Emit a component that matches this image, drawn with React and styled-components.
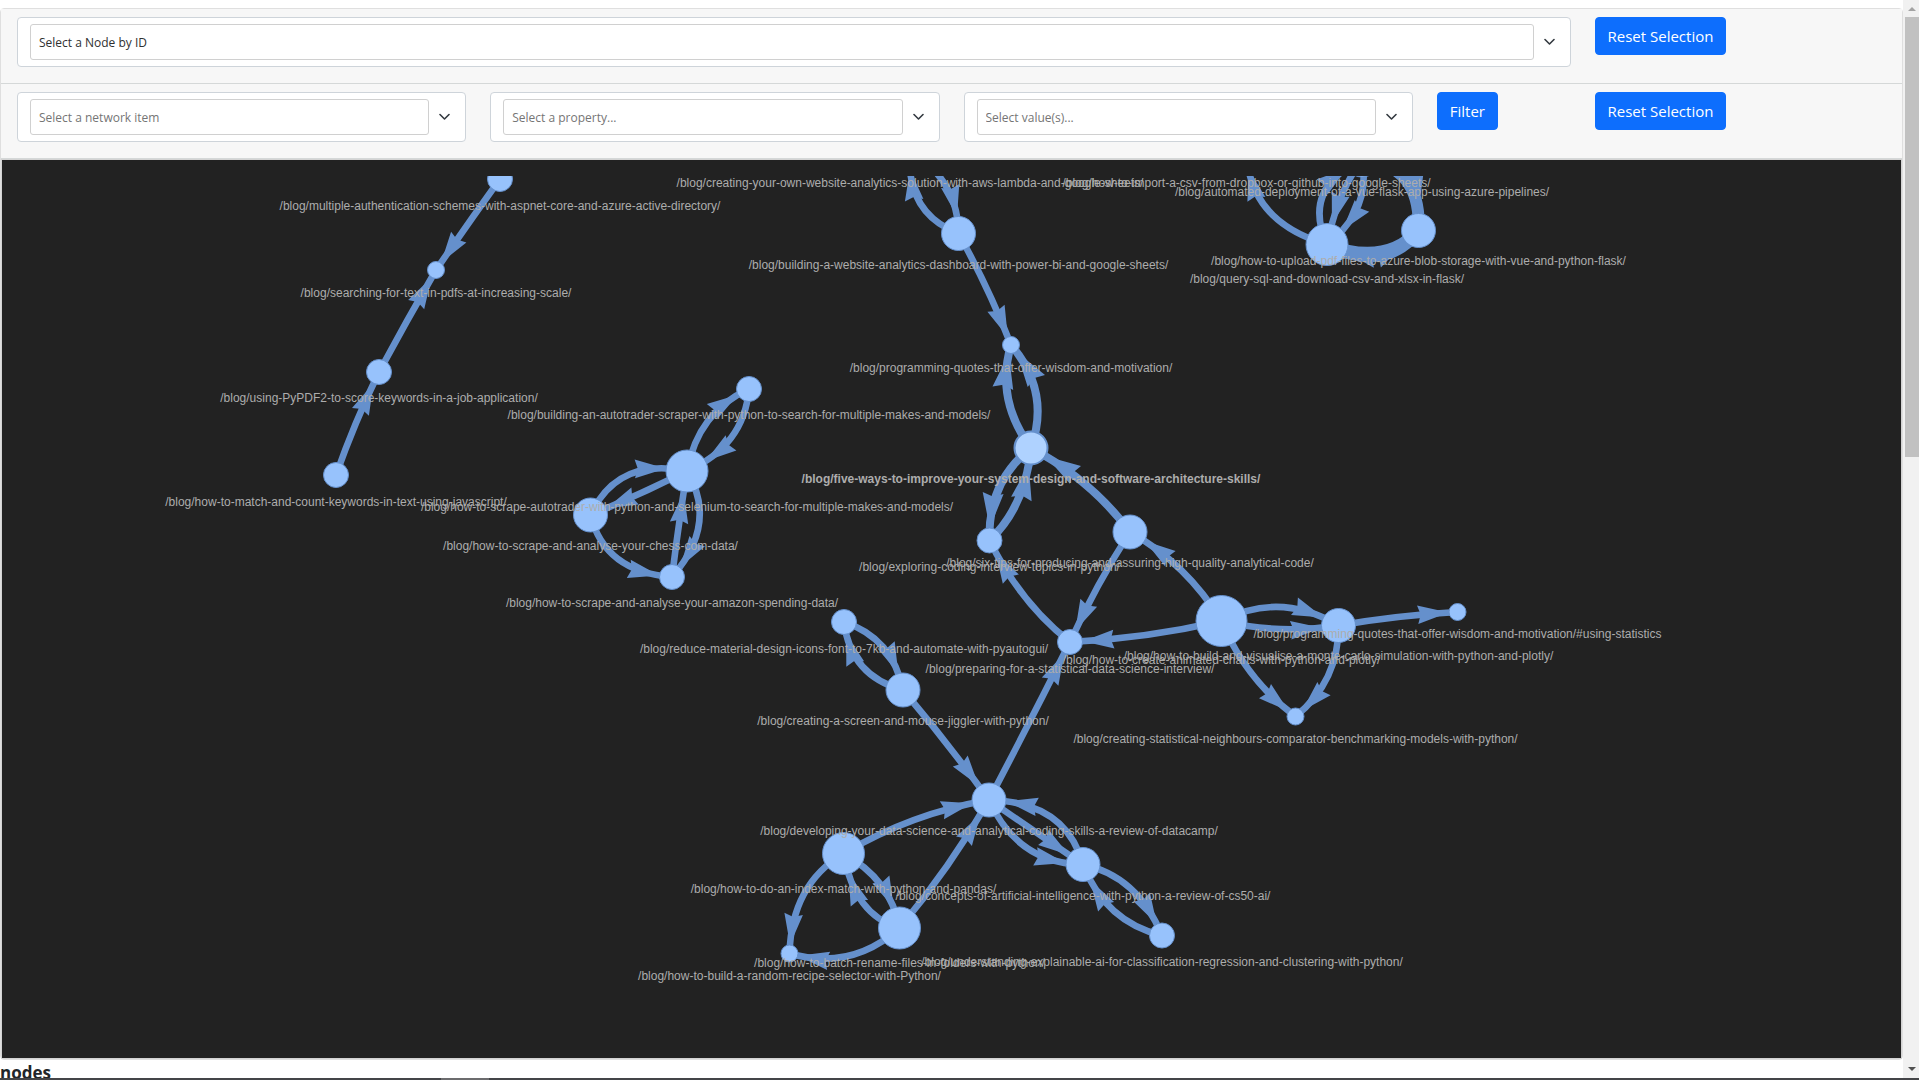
import React from "react";
import styled, { createGlobalStyle } from "styled-components";

const GlobalStyle = createGlobalStyle`
  *, *::before, *::after { box-sizing: border-box; }
  body {
    margin: 0;
    background: #fff;
    color: #212529;
    font-family: "Open Sans", "Noto Sans", sans-serif;
    font-size: 15px;
    line-height: 24px;
  }
`;

const Screen = styled.div`
  display: grid;
  grid-template-columns: minmax(0, 1fr) 16px;
  grid-template-rows: minmax(0, 1fr) 2px;
  height: 100vh;
  overflow: hidden;
`;

const Page = styled.main`
  overflow: hidden;
  padding-top: 8px;
`;

const Card = styled.section`
  border: 1px solid #dfdfdf;
  border-radius: 4px;
  background: #fff;
`;

const FilterRow = styled.form`
  display: grid;
  grid-template-columns: repeat(12, minmax(0, 1fr));
  column-gap: 24px;
  align-items: start;
  padding: 8px 16px 16px;
  background: #f7f7f7;
  border-bottom: 1px solid #d5d8d8;
`;

const Cell = styled.div`
  grid-column: span ${(p) => p.$span};
`;

const PickerBox = styled.label`
  display: flex;
  align-items: center;
  padding: 6px 15px 6px 12px;
  background: #fff;
  border: 1px solid #ced4da;
  border-radius: 4px;
`;

const PickerSelect = styled.select`
  appearance: none;
  flex: 1;
  min-width: 0;
  height: 36px;
  margin-right: 10px;
  padding: 2px 8px 0;
  border: 1px solid #d0d0d0;
  border-radius: 3px;
  background: #fff;
  color: ${(p) => (p.$chosen ? "#303030" : "#757575")};
  font: 12px/18px "Open Sans", "Noto Sans", sans-serif;
`;

const PrimaryButton = styled.button`
  height: 38px;
  padding: 0 12px;
  border: 1px solid #0d6efd;
  border-radius: 4px;
  background: #0d6efd;
  color: #fff;
  font: 15px/24px "Open Sans", "Noto Sans", sans-serif;
  white-space: nowrap;
`;

const NetworkPanel = styled.div`
  padding: 16px;
  border: 1px solid #d3d3d3;
  background: #222;
`;

const NetworkSvg = styled.svg`
  display: block;
  width: 100%;
  height: 866px;
  overflow: hidden;
`;

const NodeCircle = styled.circle`
  fill: ${(p) => (p.$active ? "#afd2ff" : "#97c2fc")};
  stroke: #6590cc;
  stroke-width: ${(p) => (p.$active ? 2 : 1)};
`;

const NodeLabel = styled.text`
  fill: #adadad;
  font-family: "Liberation Sans", Arial, sans-serif;
  font-size: 12px;
  font-weight: ${(p) => (p.$active ? 700 : 400)};
  text-anchor: middle;
`;

const TableTitle = styled.h2`
  margin: 0;
  font-size: 17px;
  line-height: 26px;
  font-weight: 700;
`;

const ScrollTrack = styled.div`
  display: flex;
  flex-direction: column;
  align-items: center;
  gap: 6px;
  padding: 7px 0 7px 2px;
  background: #f1f1f1;
`;

const ScrollThumb = styled.div`
  width: 100%;
  height: 41.4%;
  background: #c1c1c1;
`;

const ScrollArrow = styled.span`
  border: 4px solid transparent;
  border-top-width: ${(p) => (p.$down ? 4 : 0)}px;
  border-bottom-width: ${(p) => (p.$down ? 0 : 4)}px;
  border-top-color: ${(p) => (p.$down ? "#505050" : "transparent")};
  border-bottom-color: ${(p) => (p.$down ? "transparent" : "#a3a3a3")};
  margin-top: ${(p) => (p.$down ? "auto" : "0")};
`;

const WindowEdge = styled.div`
  grid-column: 1 / -1;
  padding-left: 23%;
  background: #444548;
`;

const WindowEdgeMark = styled.div`
  width: 48px;
  height: 100%;
  background: #6c6c6e;
`;

// id: [x, y, radius, label, label centre y]
const NODES = {
  auth: [500, 179, 12.5, "multiple-authentication-schemes-with-aspnet-core-and-azure-active-directory/", 206],
  search: [436, 270, 8.5, "searching-for-text-in-pdfs-at-increasing-scale/", 293],
  pypdf: [379, 372, 12.5, "using-PyPDF2-to-score-keywords-in-a-job-application/", 398],
  match: [336, 475, 12.5, "how-to-match-and-count-keywords-in-text-using-javascript/", 502],
  scraper: [749, 389, 12.5, "building-an-autotrader-scraper-with-python-to-search-for-multiple-makes-and-models/", 415],
  selenium: [687, 471, 21, "how-to-scrape-autotrader-with-python-and-selenium-to-search-for-multiple-makes-and-models/", 507],
  chess: [590.5, 515, 17, "how-to-scrape-and-analyse-your-chess-com-data/", 546],
  amazon: [672, 577, 12.5, "how-to-scrape-and-analyse-your-amazon-spending-data/", 603],
  reduce: [844, 622, 12.5, "reduce-material-design-icons-font-to-7kb-and-automate-with-pyautogui/", 649],
  jiggler: [903, 690, 17, "creating-a-screen-and-mouse-jiggler-with-python/", 721],
  lambda: [910, 152, 17, "creating-your-own-website-analytics-solution-with-aws-lambda-and-google-sheets/", 183],
  dashboard: [958.5, 233.5, 17, "building-a-website-analytics-dashboard-with-power-bi-and-google-sheets/", 265],
  quotes: [1011, 345, 8.5, "programming-quotes-that-offer-wisdom-and-motivation/", 368],
  five: [1031, 448, 16.5, "five-ways-to-improve-your-system-design-and-software-architecture-skills/", 479],
  exploring: [989.5, 540.5, 12.5, "exploring-coding-interview-topics-in-python/", 567],
  sixtips: [1130, 532, 17, "six-tips-for-producing-and-assuring-high-quality-analytical-code/", 563],
  preparing: [1070, 642, 12.5, "preparing-for-a-statistical-data-science-interview/", 669],
  charts: [1221.5, 621, 25.5, "how-to-create-animated-charts-with-python-and-plotly/", 660],
  monte: [1338.5, 625.5, 17, "how-to-build-and-visualise-a-monte-carlo-simulation-with-python-and-plotly/", 656],
  using: [1457.5, 612, 8.5, "programming-quotes-that-offer-wisdom-and-motivation/#using-statistics", 634],
  neighbours: [1295.5, 716.5, 8.5, "creating-statistical-neighbours-comparator-benchmarking-models-with-python/", 739],
  datacamp: [989, 800, 17, "developing-your-data-science-and-analytical-coding-skills-a-review-of-datacamp/", 831],
  index: [843.5, 853.5, 21, "how-to-do-an-index-match-with-python-and-pandas/", 889],
  batch: [899.5, 928, 21, "how-to-batch-rename-files-in-folders-with-python/", 963],
  recipe: [789.5, 953.5, 8.5, "how-to-build-a-random-recipe-selector-with-Python/", 976],
  cs50: [1083, 864.5, 17, "concepts-of-artificial-intelligence-with-python-a-review-of-cs50-ai/", 896],
  explain: [1162, 935.5, 12.5, "understanding-explainable-ai-for-classification-regression-and-clustering-with-python/", 962],
  dropbox: [1246.5, 152, 17, "how-to-import-a-csv-from-dropbox-or-github-into-google-sheets/", 183],
  vue: [1362, 160, 17, "automated-deployment-of-a-vue-flask-app-using-azure-pipelines/", 192],
  query: [1327, 244.5, 21, "query-sql-and-download-csv-and-xlsx-in-flask/", 279],
  upload: [1418.5, 230.5, 17, "how-to-upload-pdf-files-to-azure-blob-storage-with-vue-and-python-flask/", 261],
};

const THIN = 6.6;
const WIDE = 8;

// [from, to, curve midpoint x, curve midpoint y, width, arrow length]
const EDGES = [
  ["auth", "search", 468, 224],
  ["pypdf", "search", 407, 321],
  ["match", "pypdf", 356, 423],
  ["selenium", "scraper", 708, 421],
  ["scraper", "selenium", 731, 438],
  ["chess", "selenium", 628, 475],
  ["selenium", "chess", 639, 494],
  ["chess", "amazon", 618, 559],
  ["amazon", "selenium", 679, 524],
  ["selenium", "amazon", 699, 524],
  ["reduce", "jiggler", 883, 647],
  ["jiggler", "reduce", 862, 666],
  ["jiggler", "datacamp", 947, 744],
  ["dashboard", "lambda", 920, 203],
  ["lambda", "dashboard", 946, 186],
  ["dashboard", "quotes", 986.5, 288],
  ["five", "quotes", 1008, 398, WIDE, 35],
  ["five", "quotes", 1036, 394, WIDE, 35],
  ["five", "exploring", 999, 488, WIDE, 35],
  ["exploring", "five", 1018, 500, WIDE, 35],
  ["sixtips", "five", 1086, 485, WIDE, 35],
  ["sixtips", "preparing", 1098, 586],
  ["charts", "sixtips", 1181, 570],
  ["charts", "preparing", 1146, 635],
  ["preparing", "exploring", 1025, 597],
  ["datacamp", "preparing", 1030, 721],
  ["charts", "monte", 1280, 607],
  ["charts", "monte", 1280, 629],
  ["monte", "using", 1398, 617],
  ["charts", "neighbours", 1252, 674],
  ["monte", "neighbours", 1328, 676],
  ["index", "datacamp", 914, 820],
  ["batch", "datacamp", 947, 866],
  ["index", "batch", 881, 885],
  ["batch", "index", 863, 903],
  ["index", "recipe", 804, 894],
  ["batch", "recipe", 848, 956],
  ["datacamp", "cs50", 1027, 848],
  ["datacamp", "cs50", 1037, 833],
  ["cs50", "datacamp", 1051, 817],
  ["cs50", "explain", 1130, 888],
  ["explain", "cs50", 1114, 911],
  ["query", "dropbox", 1268, 210],
  ["query", "vue", 1323, 195],
  ["vue", "query", 1341, 197],
  ["vue", "query", 1358, 206],
  ["vue", "upload", 1406, 180, 12, 50],
  ["upload", "query", 1379, 255, 13, 30],
  ["query", "upload", 1379, 252, 12, 34],
];

// Quadratic curve through the given midpoint, with the arrow tip on the rim of the target node.
function edgeGeometry([from, to, mx, my, width = THIN, length = 31]) {
  const [x0, y0] = NODES[from];
  const [x1, y1, radius] = NODES[to];
  const cx = 2 * mx - (x0 + x1) / 2;
  const cy = 2 * my - (y0 + y1) / 2;
  const at = (t) => {
    const u = 1 - t;
    return [u * u * x0 + 2 * u * t * cx + t * t * x1, u * u * y0 + 2 * u * t * cy + t * t * y1];
  };
  let t = 1;
  let tip = at(t);
  while (t > 0.5 && Math.hypot(tip[0] - x1, tip[1] - y1) < radius) {
    t -= 0.005;
    tip = at(t);
  }
  const guide = at(t - 0.1);
  const angle = Math.atan2(tip[1] - guide[1], tip[0] - guide[0]);
  const point = (a, b) => {
    const x = tip[0] + length * (a * Math.cos(angle) - b * Math.sin(angle));
    const y = tip[1] + length * (a * Math.sin(angle) + b * Math.cos(angle));
    return `${x.toFixed(1)},${y.toFixed(1)}`;
  };
  return {
    line: `M${x0} ${y0}Q${cx} ${cy} ${x1} ${y1}`,
    head: [point(0, 0), point(-1, 0.3), point(-0.9, 0), point(-1, -0.3)].join(" "),
    width,
  };
}

function Edge({ edge }) {
  const { line, head, width } = edgeGeometry(edge);
  return (
    <g fill="#6590cc">
      <path d={line} fill="none" stroke="#6590cc" strokeWidth={width} />
      <polygon points={head} />
    </g>
  );
}

function Network() {
  const nodes = Object.entries(NODES);
  return (
    <NetworkSvg viewBox="18 176 1867 866" role="img" aria-label="Blog link network">
      {EDGES.map((edge, i) => (
        <Edge key={i} edge={edge} />
      ))}
      {nodes.map(([id, [x, y, r]]) => (
        <NodeCircle key={id} cx={x} cy={y} r={r} $active={id === "five"} />
      ))}
      {nodes.map(([id, [x, , , label, labelY]]) => (
        <NodeLabel key={id} x={x} y={labelY + 4} $active={id === "five"}>
          {`/blog/${label}`}
        </NodeLabel>
      ))}
    </NetworkSvg>
  );
}

function Picker({ text, chosen }) {
  return (
    <PickerBox>
      <PickerSelect $chosen={chosen} aria-label={text} defaultValue="">
        <option value="">{text}</option>
      </PickerSelect>
      <svg width="11" height="8" viewBox="0 0 11 8" aria-hidden="true">
        <path d="M1 1.5l4.5 4.5 4.5-4.5" fill="none" stroke="#343a40" strokeWidth="1.6" strokeLinecap="round" strokeLinejoin="round" />
      </svg>
    </PickerBox>
  );
}

export default function App() {
  return (
    <>
      <GlobalStyle />
      <Screen>
        <Page>
          <Card>
            <FilterRow>
              <Cell $span={10}>
                <Picker text="Select a Node by ID" chosen />
              </Cell>
              <Cell $span={2}>
                <PrimaryButton type="button">Reset Selection</PrimaryButton>
              </Cell>
            </FilterRow>
            <FilterRow>
              <Cell $span={3}>
                <Picker text="Select a network item" />
              </Cell>
              <Cell $span={3}>
                <Picker text="Select a property..." />
              </Cell>
              <Cell $span={3}>
                <Picker text="Select value(s)..." />
              </Cell>
              <Cell $span={1}>
                <PrimaryButton type="button">Filter</PrimaryButton>
              </Cell>
              <Cell $span={2}>
                <PrimaryButton type="button">Reset Selection</PrimaryButton>
              </Cell>
            </FilterRow>
            <NetworkPanel>
              <Network />
            </NetworkPanel>
          </Card>
          <TableTitle>nodes</TableTitle>
        </Page>
        <ScrollTrack aria-hidden="true">
          <ScrollArrow />
          <ScrollThumb />
          <ScrollArrow $down />
        </ScrollTrack>
        <WindowEdge>
          <WindowEdgeMark />
        </WindowEdge>
      </Screen>
    </>
  );
}
